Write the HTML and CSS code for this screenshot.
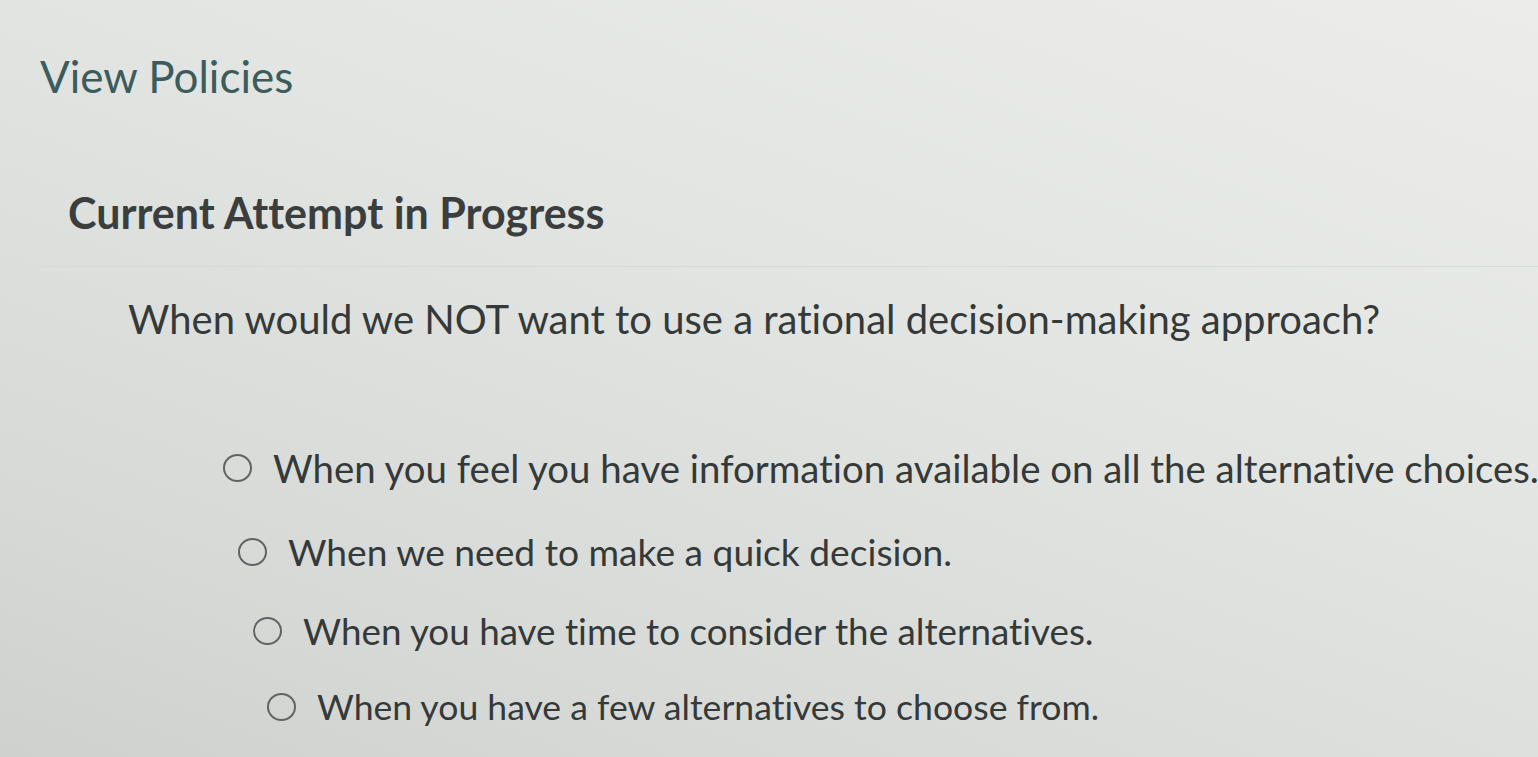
FILE: index.html
```html
<!DOCTYPE html>
<html>
<head>
<meta charset="utf-8">
<link rel="stylesheet" href="styles.css">
</head>
<body>
<div class="page">
  <div class="policies">View Policies</div>
  <div class="heading">Current Attempt in Progress</div>
  <div class="rule"></div>
  <div class="question">When would we NOT want to use a rational decision-making approach?</div>
  <div class="options">
    <label class="option o1"><span class="radio"></span><span class="otext">When you feel you have information available on all the alternative choices.</span></label>
    <label class="option o2"><span class="radio"></span><span class="otext">When we need to make a quick decision.</span></label>
    <label class="option o3"><span class="radio"></span><span class="otext">When you have time to consider the alternatives.</span></label>
    <label class="option o4"><span class="radio"></span><span class="otext">When you have a few alternatives to choose from.</span></label>
  </div>
</div>
</body>
</html>
```
FILE: styles.css
```css
html, body {
  margin: 0;
  padding: 0;
  width: 1538px;
  height: 757px;
  overflow: hidden;
}
body {
  background: linear-gradient(200deg, #ecedea 0%, #e3e5e2 40%, #d7d9d6 80%, #cfd1ce 100%);
  font-family: Lato, "Open Sans", sans-serif;
  font-variant-ligatures: none;
  color: #343939;
}
.page {
  display: flex;
  flex-direction: column;
  white-space: nowrap;
}
.policies {
  margin-top: 50px;
  margin-left: 40px;
  font-size: 44px;
  line-height: 52px;
  color: #3b5c5c;
}
.heading {
  margin-top: 86px;
  margin-left: 68px;
  font-size: 43px;
  line-height: 50px;
  font-weight: 700;
  color: #3a3e3e;
}
.rule {
  margin-top: 28px;
  height: 1px;
  background: #d8dad7;
  margin-left: 40px;
}
.question {
  margin-top: 28px;
  margin-left: 128px;
  font-size: 40px;
  line-height: 48px;
}
.options {
  display: flex;
  flex-direction: column;
}
.option {
  display: flex;
  align-items: center;
  gap: 21px;
  line-height: 44px;
}
.o1 { margin-left: 223px; margin-top: 103px; font-size: 38.4px; }
.o2 { margin-left: 238px; margin-top: 40px; font-size: 37.2px; }
.o3 { margin-left: 253px; margin-top: 35px; font-size: 36.8px; }
.o4 { margin-left: 267px; margin-top: 32px; font-size: 35.6px; }
.radio {
  width: 29px;
  height: 28px;
  border: 2px solid #5f6464;
  border-radius: 50%;
  box-sizing: border-box;
  flex: none;
}
```
